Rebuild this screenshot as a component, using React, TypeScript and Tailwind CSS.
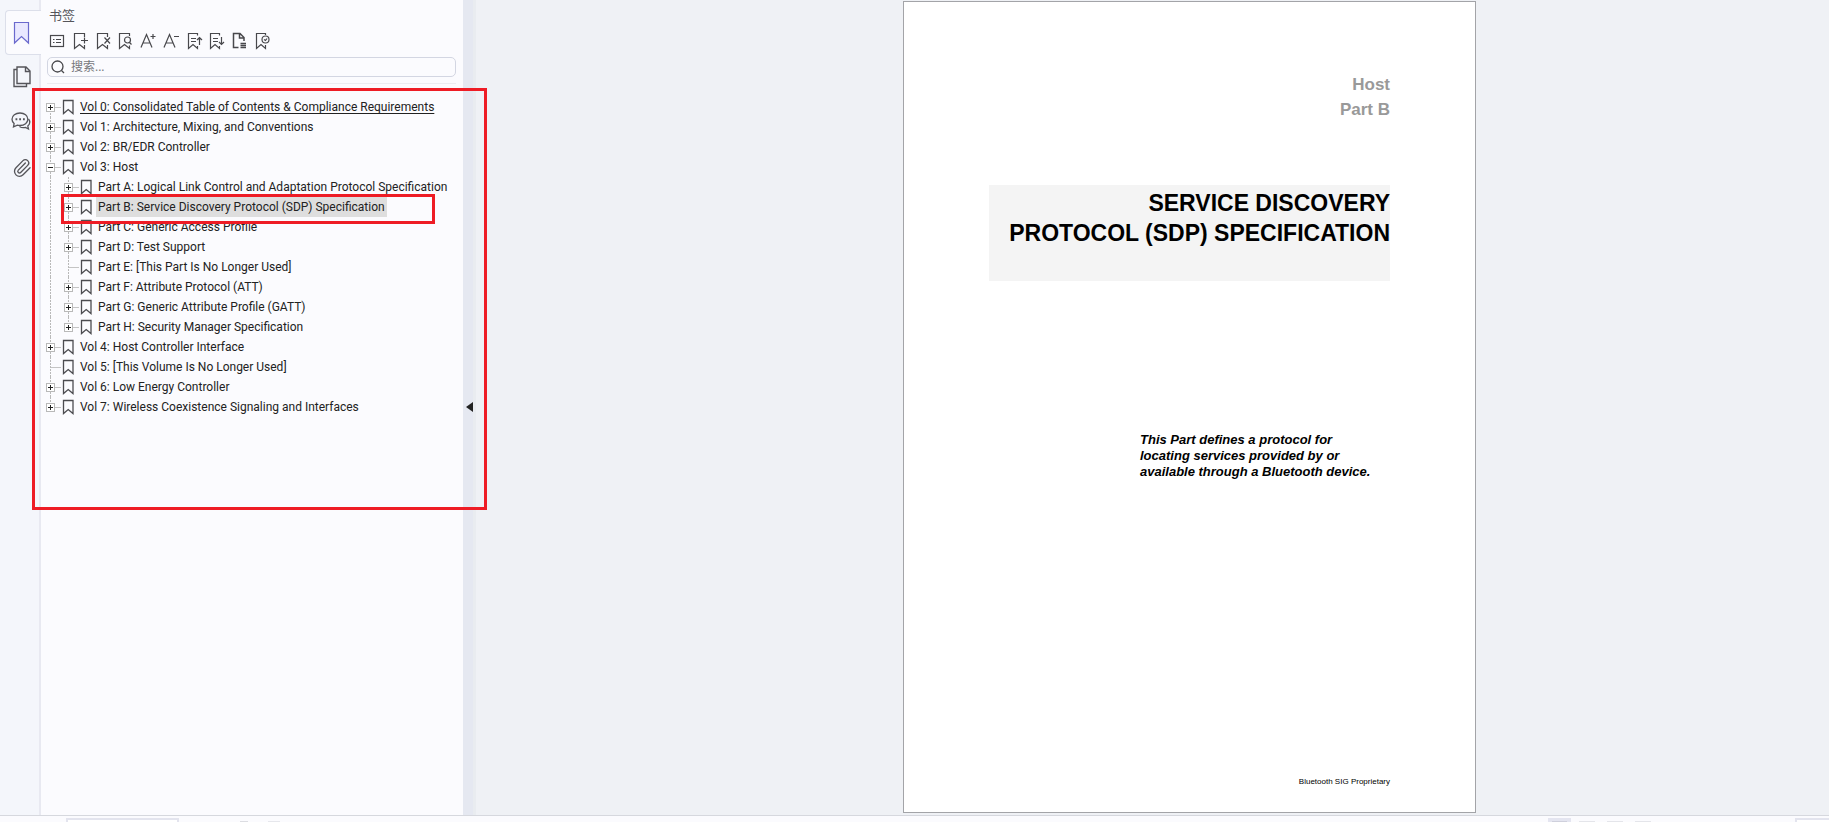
import type { ReactNode } from 'react';
import { Paperclip } from 'lucide-react';

type TreeRow = {
  title: string;
  depth: 0 | 1;
  state: 'closed' | 'open' | 'leaf';
  first?: boolean;
  last?: boolean;
};

const rows: TreeRow[] = [
  { title: 'Vol 0: Consolidated Table of Contents & Compliance Requirements', depth: 0, state: 'closed', first: true },
  { title: 'Vol 1: Architecture, Mixing, and Conventions', depth: 0, state: 'closed' },
  { title: 'Vol 2: BR/EDR Controller', depth: 0, state: 'closed' },
  { title: 'Vol 3: Host', depth: 0, state: 'open' },
  { title: 'Part A: Logical Link Control and Adaptation Protocol Specification', depth: 1, state: 'closed' },
  { title: 'Part B: Service Discovery Protocol (SDP) Specification', depth: 1, state: 'closed' },
  { title: 'Part C: Generic Access Profile', depth: 1, state: 'closed' },
  { title: 'Part D: Test Support', depth: 1, state: 'closed' },
  { title: 'Part E: [This Part Is No Longer Used]', depth: 1, state: 'leaf' },
  { title: 'Part F: Attribute Protocol (ATT)', depth: 1, state: 'closed' },
  { title: 'Part G: Generic Attribute Profile (GATT)', depth: 1, state: 'closed' },
  { title: 'Part H: Security Manager Specification', depth: 1, state: 'closed', last: true },
  { title: 'Vol 4: Host Controller Interface', depth: 0, state: 'closed' },
  { title: 'Vol 5: [This Volume Is No Longer Used]', depth: 0, state: 'leaf' },
  { title: 'Vol 6: Low Energy Controller', depth: 0, state: 'closed' },
  { title: 'Vol 7: Wireless Coexistence Signaling and Interfaces', depth: 0, state: 'closed', last: true },
];

const CURRENT = 'Part B: Service Discovery Protocol (SDP) Specification';

// Bookmark outline whose right edge is left open for a badge
const OPEN_MARK = 'M13.5 5V1.5H3.5V16.5l5-4 5 4V13';

const tools: { label: string; icon: ReactNode }[] = [
  {
    label: 'Options',
    icon: (
      <>
        <rect x="2.5" y="3.5" width="13" height="11" />
        <path d="M5 7.5h1.5M8 7.5h5M5 10.5h1.5M8 10.5h5" />
      </>
    ),
  },
  { label: 'Add bookmark', icon: <path d={`${OPEN_MARK}M10 8.5h7M13.5 5.5v6`} /> },
  { label: 'Delete bookmark', icon: <path d={`${OPEN_MARK}M10.5 5.5l5.5 6M16 5.5l-5.5 6`} /> },
  {
    label: 'Find bookmark',
    icon: (
      <>
        <path d="M13.5 4V1.5h-10v15l5-4 5 4v-3M13.5 10.5l2 2" />
        <circle cx="11.5" cy="8" r="3" />
      </>
    ),
  },
  { label: 'Larger text', icon: <path d="M2 15.5 7.5 2.5 13 15.5M4 11h7M11.5 4.5h5M14 2v5" /> },
  { label: 'Smaller text', icon: <path d="M2 15.5 7.5 2.5 13 15.5M4 11h7M12 4.5h5" /> },
  {
    label: 'Promote',
    icon: <path d="M12.5 3.5v-2h-9v15L8 12.5l4.5 4V14M6 6.5h5M6 9.5h5M14.5 13V5.5M12 8l2.5-2.5L17 8" />,
  },
  {
    label: 'Demote',
    icon: <path d="M12.5 3.5v-2h-9v15L8 12.5l4.5 4V14M6 6.5h5M6 9.5h5M14.5 5v7.5M12 10l2.5 2.5L17 10" />,
  },
  {
    label: 'Extract pages',
    icon: (
      <>
        <path d="M8.5 15.5h-5v-14H10l4 4V9M9.500 2v4H14" strokeWidth="1.5" />
        <path d="M10.5 11.5H16M10.5 13.5H16M10.5 15.5H16" strokeWidth="1.3" />
      </>
    ),
  },
  {
    label: 'Recent',
    icon: (
      <>
        <path d="M12.5 3V1.5h-9v15L8 12.5l4.5 4V13" />
        <circle cx="12.5" cy="7.5" r="3.5" />
        <path d="M11 7.5l1.5 1 1.500-2" />
      </>
    ),
  },
];

function Guide({ row }: { row: TreeRow }) {
  const top = row.first ? 10 : 0;
  const bottom = row.last ? 10 : 20;
  return (
    <svg className="shrink-0" width="16" height="20" viewBox="0 0 16 20" fill="none" stroke="#b9b9b9">
      <path d={`M4.5 ${top}V${bottom}`} strokeDasharray="2 1" />
      <path d="M5 10.5h10" stroke="#c4c4c4" />
      {row.state !== 'leaf' && (
        <>
          <rect x="0.5" y="6.5" width="8" height="8" fill="#fff" />
          <path d="M2 10.5h5" stroke="#222" />
          {row.state === 'closed' && <path d="M4.5 8v5" stroke="#222" />}
        </>
      )}
    </svg>
  );
}

function TreeItem({ row }: { row: TreeRow }) {
  return (
    <li className="flex h-5 items-center">
      {row.depth === 1 && (
        <svg className="shrink-0" width="18" height="20" viewBox="0 0 18 20" stroke="#b9b9b9">
          <path d="M4.5 0V20" strokeDasharray="2 1" />
        </svg>
      )}
      {row.state === 'leaf' ? (
        <Guide row={row} />
      ) : (
        <button type="button" className="shrink-0" aria-label={`Toggle ${row.title}`}>
          <Guide row={row} />
        </button>
      )}
      <svg className="shrink-0" width="12" height="16" viewBox="0 0 12 16" fill="none" stroke="#4c4c50" strokeWidth="1.3">
        <path d="M1.5 1.5h9.500v13L6.200 10.500l-4.700 4z" />
      </svg>
      <a
        href="#page"
        className={
          row.title === CURRENT
            ? 'ml-1 h-5 whitespace-nowrap bg-[#dedede] px-0.5 leading-5'
            : row.first
              ? 'ml-1.5 whitespace-nowrap leading-5 underline underline-offset-2'
              : 'ml-1.5 whitespace-nowrap leading-5'
        }
      >
        {row.title}
      </a>
    </li>
  );
}

function Rail() {
  return (
    <nav className="flex w-[41px] shrink-0 flex-col border-r-2 border-[#e8e9f1] bg-[#f4f6fb] pt-2.5 pl-[5px] text-[#55555a]">
      <button
        type="button"
        aria-label="书签"
        className="-mr-0.5 flex h-[45px] items-center rounded-l border border-r-0 border-[#dcdfea] bg-[#fbfbfe] pl-[7px]"
      >
        <svg width="17" height="24" viewBox="0 0 17 24" fill="#e9e8ff" stroke="#6a69cd" strokeWidth="1.2">
          <path d="M1.5 1.500h14v20.500L8.500 15.500l-7 6.500z" />
        </svg>
      </button>
      <button type="button" aria-label="Pages" className="mt-2.5 flex h-6 items-center pl-2">
        <svg width="18" height="22" viewBox="0 0 18 22" fill="none" stroke="currentColor" strokeWidth="1.4">
          <path d="M4 1h9l4 4v12.500H4zM12.500 1v4.500H17M4 3.500H1V20.500h12.500v-3" />
        </svg>
      </button>
      <button type="button" aria-label="Comments" className="mt-5 flex h-6 items-center pl-1.5">
        <svg width="20" height="19" viewBox="0 0 20 19" fill="none" stroke="currentColor" strokeWidth="1.3">
          <path d="M9 1c4.500 0 7.800 2.600 7.800 6.200S13.500 13.500 9 13.500c-1 0-1.900-.1-2.700-.4L2.500 14.800l.6-3.200C1.900 10.500 1 9 1 7.200 1 3.600 4.500 1 9 1z" />
          <path d="M17.500 7c2 2.400 1.500 5.200-.7 7l.7 3-3-1.600c-2.200.6-4.500.2-6-1" />
          <path d="M4.500 7.200h1.800M8.200 7.200H10M12 7.200h1.800" strokeWidth="2" />
        </svg>
      </button>
      <button type="button" aria-label="Attachments" className="mt-[23px] flex h-6 items-center pl-[7px]">
        <Paperclip size={20} strokeWidth={1.6} />
      </button>
    </nav>
  );
}

function BookmarkPanel() {
  return (
    <section className="flex w-[422px] shrink-0 flex-col bg-[#fbfbfe] pr-[7px] pl-1.5">
      <h2 className="mt-1.5 pl-0.5 text-[13px] leading-[18px] text-[#55555a]">书签</h2>
      <div className="mt-2 ml-px flex w-[223px] justify-between">
        {tools.map((tool) => (
          <button key={tool.label} type="button" aria-label={tool.label}>
            <svg width="18" height="18" viewBox="0 0 18 18" fill="none" stroke="#48484c" strokeWidth="1.2">
              {tool.icon}
            </svg>
          </button>
        ))}
      </div>
      <label className="mt-[7px] flex h-5 items-center gap-1.5 rounded-[5px] border border-[#d3d6e2] pl-[3px]">
        <svg width="14" height="14" viewBox="0 0 14 14" fill="none" stroke="#48484c" strokeWidth="1.3">
          <circle cx="6.5" cy="6.5" r="5.5" />
          <path d="M10.5 10.5l2.5 2.5" />
        </svg>
        <input
          type="text"
          aria-label="搜索"
          placeholder="搜索..."
          className="min-w-0 flex-1 bg-transparent text-xs leading-4 outline-none placeholder:text-[#77777c]"
        />
      </label>
      <hr className="mt-1.5 border-[#ececf1]" />
      <ul className="mt-[13px] -ml-px font-[Roboto,'Open_Sans',sans-serif] text-xs text-[#222]">
        {rows.map((row) => (
          <TreeItem key={row.title} row={row} />
        ))}
      </ul>
    </section>
  );
}

function DocumentPage() {
  return (
    <article
      id="page"
      className="flex w-[573px] flex-col border border-[#a3a4a8] bg-white px-[85px] font-['Liberation_Sans',Arial,sans-serif] text-black"
    >
      <p className="mt-[70px] text-right text-[17px] leading-[25px] font-bold text-[#999]">
        Host
        <br />
        Part B
      </p>
      <h1 className="mt-[63px] h-24 bg-[#f4f4f4] pt-[3px] text-right text-[23px] leading-[30px] font-bold">
        SERVICE DISCOVERY
        <br />
        PROTOCOL (SDP) SPECIFICATION
      </h1>
      <p className="mt-[151px] pl-[151px] text-[13px] leading-4 font-bold italic">
        This Part defines a protocol for
        <br />
        locating services provided by or
        <br />
        available through a Bluetooth device.
      </p>
      <p className="mt-auto mb-[25px] text-right text-[8px] leading-[10px]">Bluetooth SIG Proprietary</p>
    </article>
  );
}

function StatusBar() {
  return (
    <footer className="flex h-8 shrink-0 items-start border-t border-[#d6d8de] bg-[#fbfbfe] pt-0.5">
      <input
        type="text"
        aria-label="Page number"
        className="ml-[66px] h-6 w-[113px] border-2 border-[#e3e4ee] bg-white outline-none"
      />
      <div className="mt-[3px] ml-[61px] flex gap-5">
        <span className="h-px w-2 bg-[#dcdde2]" />
        <span className="h-px w-3 bg-[#e6e7ec]" />
      </div>
      <div className="ml-auto flex items-start gap-2">
        <span className="h-6 w-[23px] bg-[#e4e5f0] px-1 pt-[3px]">
          <span className="block h-px bg-[#cfd0dc]" />
        </span>
        <span className="mt-[3px] h-px w-4 bg-[#e4e5ea]" />
        <span className="mt-[3px] ml-1 h-px w-4 bg-[#e4e5ea]" />
        <span className="mt-[3px] ml-1 h-px w-4 bg-[#e4e5ea]" />
      </div>
      <input
        type="text"
        aria-label="Zoom"
        className="ml-36 h-6 w-[34px] border-2 border-r-0 border-[#e3e4ee] bg-white outline-none"
      />
    </footer>
  );
}

export default function App() {
  return (
    <div className="relative h-screen overflow-hidden font-['Open_Sans','Noto_Sans','Noto_Sans_CJK_SC',sans-serif]">
      <main className="flex h-[calc(100vh-7px)]">
        <Rail />
        <BookmarkPanel />
        <button
          type="button"
          aria-label="Collapse panel"
          className="flex w-[13px] shrink-0 items-center border-r-[3px] border-[#e9ecf0] bg-[#e5e8f1] pb-0.5 pl-[3px]"
        >
          <svg width="7" height="10" viewBox="0 0 7 10" fill="#222">
            <path d="M7 0v10L0 5z" />
          </svg>
        </button>
        <div className="flex flex-1 justify-center bg-[#eff1f5] pt-px pb-0.5 pl-[74px]">
          <DocumentPage />
        </div>
      </main>
      <StatusBar />
      <div className="pointer-events-none absolute top-[88px] left-8 h-[422px] w-[455px] border-[3px] border-[#ee1c25]" />
      <div className="pointer-events-none absolute top-[194px] left-[61px] h-[30px] w-[374px] border-[3px] border-[#ee1c25]" />
    </div>
  );
}
